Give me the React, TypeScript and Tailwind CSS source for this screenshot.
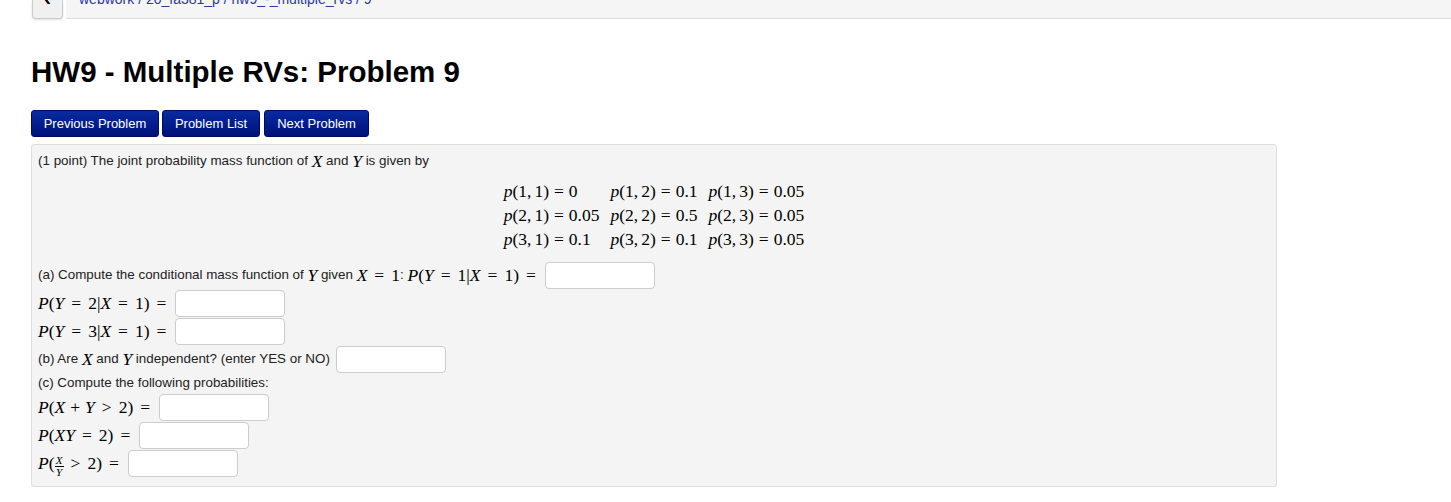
import React from 'react';

const sans = { fontFamily: '"Liberation Sans", Arial, sans-serif' };
const serif = { fontFamily: '"Liberation Serif", "Times New Roman", serif' };

function V({ children }: { children: React.ReactNode }) {
  return <span className="italic" style={serif}>{children}</span>;
}

function Eq({ tight }: { tight?: boolean }) {
  return <span className={tight ? 'mx-[5px]' : 'mx-[7px]'}>=</span>;
}

function Math({ children }: { children: React.ReactNode }) {
  return <span className="text-[17.5px] text-black whitespace-nowrap" style={serif}>{children}</span>;
}

function Answer() {
  return <input type="text" className="ml-[2px] h-[27px] w-[110px] rounded-[4px] border border-[#cccccc] bg-white px-2 text-[13px] outline-none" />;
}

function Cell({ i, j, v }: { i: number; j: number; v: string }) {
  return (
    <Math>
      <V>p</V>({i},<span className="ml-[3px]">{j}</span>)<Eq tight />{v}
    </Math>
  );
}

const table = [
  ['0', '0.1', '0.05'],
  ['0.05', '0.5', '0.05'],
  ['0.1', '0.1', '0.05'],
];

export default function App() {
  return (
    <div className="min-h-screen bg-white text-[#333]" style={sans}>
      {/* breadcrumb */}
      <div className="flex items-end">
        <div className="ml-[32px] flex h-[19px] w-[31px] items-start justify-center overflow-hidden rounded-b-[4px] border border-t-0 border-[#cccccc] bg-[#f0f0f0] shadow-sm">
          <span className="-mt-[12px] text-[22px] leading-none font-bold text-black">‹</span>
        </div>
        <div className="ml-[3px] flex h-[19px] flex-1 items-start overflow-hidden border-b border-[#dddddd] bg-[#f5f5f5] pl-[13px]">
          <span className="-mt-[8px] text-[14px] leading-none whitespace-nowrap text-[#2b3a9a]">webwork / 20_fa381_p / hw9_-_multiple_rvs / 9</span>
        </div>
      </div>

      <div className="pl-[31px]">
        <h1 className="mt-[36px] text-[29.5px] leading-[34px] font-bold text-black">HW9 - Multiple RVs: Problem 9</h1>

        <div className="mt-[21px] flex gap-[3px]">
          {['Previous Problem', 'Problem List', 'Next Problem'].map((b, i) => (
            <button
              key={b}
              className={`h-[27px] rounded-[3px] border border-[#000a66] bg-gradient-to-b from-[#0a2aa0] to-[#00107a] text-[13px] text-white ${i === 0 ? 'w-[128px]' : i === 1 ? 'w-[98px]' : 'ml-[1px] w-[105px]'}`}
            >
              {b}
            </button>
          ))}
        </div>

        <div className="mt-[7px] w-[1246px] rounded-[3px] border border-[#dddddd] bg-[#f4f4f4] pt-[8px] pr-[6px] pb-[9px] pl-[6px] text-[13.4px] text-[#222]">
          <div className="flex h-[16px] items-center">
            (1 point) The joint probability mass function of&nbsp;
            <Math><V>X</V></Math>&nbsp;and&nbsp;<Math><V>Y</V></Math>&nbsp;is given by
          </div>

          <div className="mt-[12px] flex justify-center">
            <div className="grid grid-cols-[auto_auto_auto] gap-x-[11px] gap-y-[3px]">
              {table.map((row, i) =>
                row.map((v, j) => (
                  <div key={`${i}${j}`} className="h-[21px] leading-[21px]">
                    <Cell i={i + 1} j={j + 1} v={v} />
                  </div>
                ))
              )}
            </div>
          </div>

          <div className="mt-[11px] flex h-[28px] items-center">
            (a) Compute the conditional mass function of&nbsp;<Math><V>Y</V></Math>&nbsp;given&nbsp;
            <Math><V>X</V><Eq />1</Math>:&nbsp;
            <Math><V>P</V>(<V>Y</V><Eq />1|<V>X</V><Eq />1)<Eq /></Math>
            <Answer />
          </div>
          <div className="flex h-[28px] items-center">
            <Math><V>P</V>(<V>Y</V><Eq />2|<V>X</V><Eq />1)<Eq /></Math>
            <Answer />
          </div>
          <div className="flex h-[28px] items-center">
            <Math><V>P</V>(<V>Y</V><Eq />3|<V>X</V><Eq />1)<Eq /></Math>
            <Answer />
          </div>
          <div className="flex h-[28px] items-center">
            (b) Are&nbsp;<Math><V>X</V></Math>&nbsp;and&nbsp;<Math><V>Y</V></Math>&nbsp;independent? (enter YES or NO)&nbsp;
            <Answer />
          </div>
          <div className="flex h-[20px] items-center">(c) Compute the following probabilities:</div>
          <div className="flex h-[28px] items-center">
            <Math><V>P</V>(<V>X</V><span className="mx-[5px]">+</span><V>Y</V><span className="mx-[7px]">&gt;</span>2)<Eq /></Math>
            <Answer />
          </div>
          <div className="flex h-[28px] items-center">
            <Math><V>P</V>(<V>XY</V><Eq />2)<Eq /></Math>
            <Answer />
          </div>
          <div className="flex h-[28px] items-center">
            <Math>
              <V>P</V>(
              <span className="inline-flex translate-y-[2px] flex-col items-center align-middle text-[11px] leading-[9px]">
                <V>X</V>
                <span className="my-[1px] h-px w-[9px] bg-black" />
                <V>Y</V>
              </span>
              <span className="mx-[7px]">&gt;</span>2)<Eq />
            </Math>
            <Answer />
          </div>
        </div>
      </div>
    </div>
  );
}
